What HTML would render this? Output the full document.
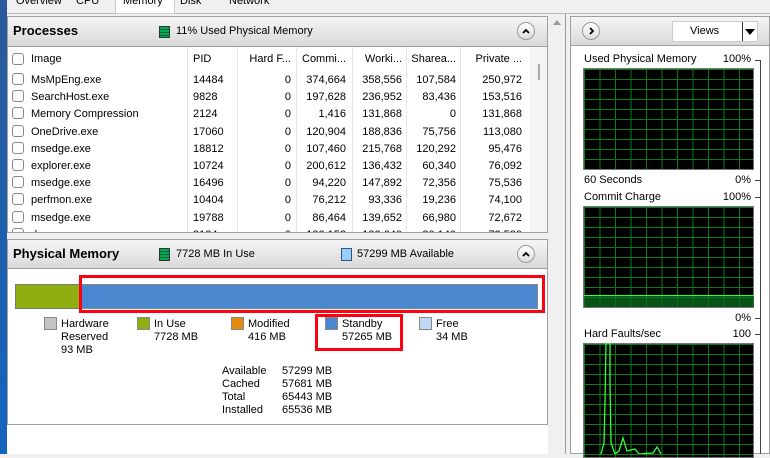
<!DOCTYPE html>
<html><head><style>
*{margin:0;padding:0;box-sizing:border-box}
body{width:770px;height:454px;overflow:hidden;background:#f0f0f0;font-family:"Liberation Sans",sans-serif;font-size:11px;color:#000;position:relative}
.a{position:absolute;white-space:nowrap}
.hdr{position:absolute;background:linear-gradient(#f6f6f6,#d9d9d9);border:1px solid #a0a0a0}
.cb{position:absolute;width:12px;height:12px;border:1px solid #888;border-radius:3px;background:#fff}
.r{text-align:right}
.circ{position:absolute;width:18px;height:18px;border-radius:50%;border:1px solid #999;background:linear-gradient(#fff,#ddd)}
.sw{position:absolute;width:13px;height:13px;border:1px solid #888}
.graph{position:absolute;background-color:#000;background-image:linear-gradient(90deg,#0a7a1a 1px,transparent 1px),linear-gradient(#0a7a1a 1px,transparent 1px);background-size:15.5px 10px;border:1px solid #777}
</style></head><body>
<div class="a" style="left:0;top:0;width:7px;height:454px;background:linear-gradient(#2a5a9a,#1565c0)"></div>
<div class="a" style="left:7px;top:0;width:763px;height:14px;background:#f0f0f0;border-bottom:1px solid #bbb"></div>
<div class="a" style="left:16px;top:-5px;font-size:11px">Overview</div>
<div class="a" style="left:76px;top:-5px">CPU</div>
<div class="a" style="left:115px;top:-6px;width:60px;height:20px;background:#fff;border:1px solid #ccc"></div>
<div class="a" style="left:123px;top:-5px">Memory</div>
<div class="a" style="left:180px;top:-5px">Disk</div>
<div class="a" style="left:229px;top:-5px">Network</div>

<div class="a" style="left:7px;top:16px;width:541px;height:217px;background:#fff;border:1px solid #a0a0a0"></div>
<div class="hdr" style="left:7px;top:16px;width:541px;height:31px"></div>
<div class="a" style="left:13px;top:23px;font-size:13px;font-weight:bold">Processes</div>
<div class="a" style="left:159px;top:26px;width:11px;height:12px;background:repeating-linear-gradient(#0a5 0 2px,#063 2px 3px);border:1px solid #333"></div>
<div class="a" style="left:176px;top:25px">11% Used Physical Memory</div>
<div class="circ" style="left:517px;top:22px"><svg width="16" height="16" style="position:absolute;left:0;top:0"><polyline points="5,10 8,7 11,10" fill="none" stroke="#000" stroke-width="1.8"/></svg></div>
<div class="a" style="left:8px;top:47px;width:522px;height:21px;background:#fff"></div>
<div class="cb" style="left:12px;top:53px"></div>
<div class="a" style="left:31px;top:53px">Image</div>
<div class="a" style="left:193px;top:53px">PID</div>
<div class="a r" style="left:237px;top:53px;width:54px">Hard F...</div>
<div class="a r" style="left:296px;top:53px;width:50px">Commi...</div>
<div class="a r" style="left:352px;top:53px;width:50px">Worki...</div>
<div class="a r" style="left:406px;top:53px;width:50px">Sharea...</div>
<div class="a r" style="left:460px;top:53px;width:62px">Private ...</div>
<div class="a" style="left:187px;top:47px;width:1px;height:186px;background:#e6e6e6"></div>
<div class="a" style="left:237px;top:47px;width:1px;height:186px;background:#e6e6e6"></div>
<div class="a" style="left:296px;top:47px;width:1px;height:186px;background:#e6e6e6"></div>
<div class="a" style="left:352px;top:47px;width:1px;height:186px;background:#e6e6e6"></div>
<div class="a" style="left:406px;top:47px;width:1px;height:186px;background:#e6e6e6"></div>
<div class="a" style="left:460px;top:47px;width:1px;height:186px;background:#e6e6e6"></div>
<div class="a" style="left:530px;top:47px;width:17px;height:185px;background:#f4f4f4"></div>
<div class="a" style="left:538px;top:64px;width:2px;height:16px;background:#aaa"></div>
<div id="rows"></div>

<div class="a" style="left:7px;top:239px;width:541px;height:186px;background:#fff;border:1px solid #a0a0a0"></div>
<div class="hdr" style="left:7px;top:239px;width:541px;height:30px"></div>
<div class="a" style="left:13px;top:246px;font-size:13px;font-weight:bold">Physical Memory</div>
<div class="a" style="left:159px;top:248px;width:11px;height:13px;background:repeating-linear-gradient(#0a5 0 2px,#063 2px 3px);border:1px solid #333"></div>
<div class="a" style="left:176px;top:248px">7728 MB In Use</div>
<div class="a" style="left:341px;top:248px;width:11px;height:13px;background:#9cf;border:1px solid #357"></div>
<div class="a" style="left:357px;top:248px">57299 MB Available</div>
<div class="circ" style="left:517px;top:245px"><svg width="16" height="16" style="position:absolute;left:0;top:0"><polyline points="5,10 8,7 11,10" fill="none" stroke="#000" stroke-width="1.8"/></svg></div>
<div class="a" style="left:15px;top:284px;width:65px;height:25px;background:#8fae0f;border:1px solid #777"></div>
<div class="a" style="left:79px;top:284px;width:459px;height:25px;background:#4a87cf;border:1px solid #888"></div>
<div class="a" style="left:79px;top:275px;width:466px;height:38px;border:3px solid #f01"></div>
<div class="sw" style="left:44px;top:317px;background:#c4c4c4"></div>
<div class="a" style="left:61px;top:318px;line-height:13px">Hardware<br>Reserved<br>93 MB</div>
<div class="sw" style="left:137px;top:317px;background:#8fae0f"></div>
<div class="a" style="left:154px;top:318px;line-height:13px">In Use<br>7728 MB</div>
<div class="sw" style="left:231px;top:317px;background:#e58a10"></div>
<div class="a" style="left:248px;top:318px;line-height:13px">Modified<br>416 MB</div>
<div class="sw" style="left:325px;top:317px;background:#4a87cf"></div>
<div class="a" style="left:342px;top:318px;line-height:13px">Standby<br>57265 MB</div>
<div class="a" style="left:315px;top:314px;width:88px;height:37px;border:3px solid #f01"></div>
<div class="sw" style="left:419px;top:317px;background:#c0d8f4"></div>
<div class="a" style="left:436px;top:318px;line-height:13px">Free<br>34 MB</div>
<div class="a" style="left:222px;top:365px;line-height:13px">Available<br>Cached<br>Total<br>Installed</div>
<div class="a" style="left:282px;top:365px;line-height:13px">57299 MB<br>57681 MB<br>65443 MB<br>65536 MB</div>
<div class="a" style="left:7px;top:425px;width:541px;height:29px;background:#fff"></div>

<div class="a" style="left:553px;top:20px;width:0;height:0;border-left:4px solid transparent;border-right:4px solid transparent;border-bottom:5px solid #999"></div>
<div class="a" style="left:565px;top:14px;width:1px;height:440px;background:#999"></div>

<div class="a" style="left:570px;top:16px;width:200px;height:438px;background:#fff;border:1px solid #a0a0a0"></div>
<div class="hdr" style="left:570px;top:16px;width:200px;height:30px"></div>
<div class="circ" style="left:582px;top:22px"><svg width="16" height="16" style="position:absolute;left:0;top:0"><polyline points="7,5 10,8 7,11" fill="none" stroke="#000" stroke-width="1.8"/></svg></div>
<div class="a" style="left:672px;top:21px;width:86px;height:21px;background:#fff;border:1px solid #ccc"></div>
<div class="a" style="left:690px;top:25px">Views</div>
<div class="a" style="left:742px;top:22px;width:1px;height:19px;background:#333"></div>
<div class="a" style="left:745px;top:29px;border-left:5px solid transparent;border-right:5px solid transparent;border-top:6px solid #000"></div>
<div class="a" style="left:584px;top:53px">Used Physical Memory</div>
<div class="a r" style="left:700px;top:53px;width:51px">100%</div>
<div class="graph" style="left:583px;top:68px;width:171px;height:102px"></div>
<div class="a" style="left:584px;top:174px">60 Seconds</div>
<div class="a r" style="left:700px;top:174px;width:51px">0%</div>
<div class="a" style="left:584px;top:191px">Commit Charge</div>
<div class="a r" style="left:700px;top:191px;width:51px">100%</div>
<div class="graph" style="left:583px;top:206px;width:171px;height:102px"></div>
<div class="a" style="left:584px;top:295px;width:170px;height:12px;background:rgba(10,110,30,.75);border-top:1px solid #3f3"></div>
<div class="a r" style="left:700px;top:312px;width:51px">0%</div>
<div class="a" style="left:584px;top:328px">Hard Faults/sec</div>
<div class="a r" style="left:700px;top:328px;width:51px">100</div>
<div class="graph" style="left:583px;top:343px;width:171px;height:115px"></div>
<svg class="a" style="left:583px;top:343px" width="171" height="111"><polyline points="18,111 21,100 22,60 23,0 27,0 27,40 28,100 32,111 36,108 40,95 44,108 52,106 56,111 70,110 74,104 78,111" fill="none" stroke="#3f3" stroke-width="1.3"/></svg>
<div class="a" style="left:760px;top:60px;width:1px;height:394px;background:#444"></div>
<div class="a" style="left:755px;top:60px;width:5px;height:1px;background:#444"></div>
<div class="a" style="left:755px;top:180px;width:5px;height:1px;background:#444"></div>
<div class="a" style="left:755px;top:197px;width:5px;height:1px;background:#444"></div>
<div class="a" style="left:755px;top:318px;width:5px;height:1px;background:#444"></div>
<div class="a" style="left:755px;top:334px;width:5px;height:1px;background:#444"></div>
<script>
var d=[["MsMpEng.exe",14484,0,"374,664","358,556","107,584","250,972"],["SearchHost.exe",9828,0,"197,628","236,952","83,436","153,516"],["Memory Compression",2124,0,"1,416","131,868","0","131,868"],["OneDrive.exe",17060,0,"120,904","188,836","75,756","113,080"],["msedge.exe",18812,0,"107,460","215,768","120,292","95,476"],["explorer.exe",10724,0,"200,612","136,432","60,340","76,092"],["msedge.exe",16496,0,"94,220","147,892","72,356","75,536"],["perfmon.exe",10404,0,"76,212","93,336","19,236","74,100"],["msedge.exe",19788,0,"86,464","139,652","66,980","72,672"],["dwm.exe",3184,0,"183,152","183,640","30,140","72,580"]];
var h="",L=[[237,54],[296,50],[352,50],[406,50],[460,62]];
d.forEach(function(r,i){var y=74+i*17.2;
h+='<div class="cb" style="left:12px;top:'+(y-1)+'px"></div><div class="a" style="left:31px;top:'+y+'px">'+r[0]+'</div><div class="a" style="left:193px;top:'+y+'px">'+r[1]+'</div>';
for(var j=0;j<5;j++)h+='<div class="a r" style="left:'+L[j][0]+'px;top:'+y+'px;width:'+L[j][1]+'px">'+r[j+2]+'</div>';});
h+='<div class="a" style="left:8px;top:232px;width:540px;height:7px;background:#f0f0f0;border-top:1px solid #a0a0a0"></div>';
document.getElementById("rows").innerHTML=h;
</script>
</body></html>
